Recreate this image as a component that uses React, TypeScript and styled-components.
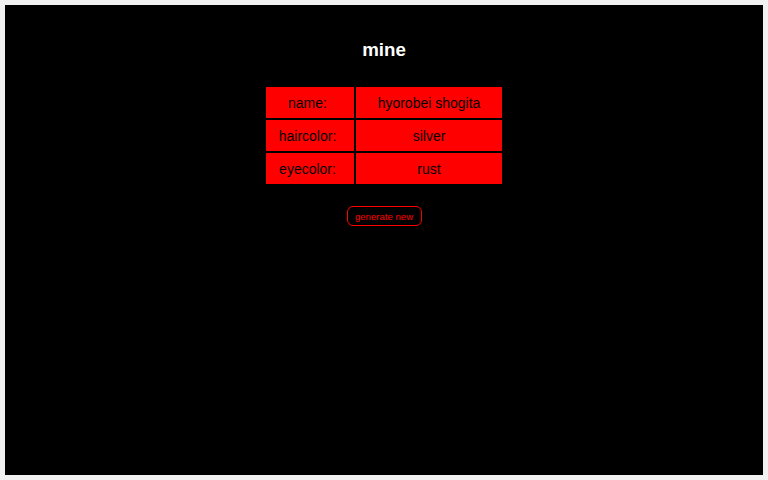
import React from "react";
import styled, { createGlobalStyle } from "styled-components";

const Global = createGlobalStyle`
  html, body { margin: 0; padding: 0; background: #f1f1f1; }
  body { padding: 5px; font-family: "Liberation Sans", Arial, sans-serif; }
`;

const Page = styled.div`
  background: #000;
  height: 470px;
  display: flex;
  flex-direction: column;
  align-items: center;
  padding-top: 34px;
  box-sizing: border-box;
`;

const Title = styled.h3`
  margin: 0;
  color: #fff;
  font-size: 18.72px;
  font-weight: bold;
  line-height: 22px;
`;

const Table = styled.table`
  margin-top: 24px;
  border-collapse: separate;
  border-spacing: 2px;
  background: #000;
`;

const Cell = styled.td<{ $w: number; $pr?: number }>`
  background: #ff0000;
  color: #000;
  width: ${(p) => p.$w}px;
  height: 31px;
  padding: 0 ${(p) => p.$pr ?? 0}px 0 0;
  text-align: center;
  vertical-align: middle;
  font-size: 14px;
  box-sizing: border-box;
`;

const Button = styled.button`
  margin-top: 20px;
  background: #000;
  color: #ff0000;
  border: 1px solid #ff0000;
  border-radius: 6px;
  width: 75px;
  height: 20px;
  padding: 0;
  font-family: "Liberation Sans", Arial, sans-serif;
  font-size: 9.6px;
  cursor: pointer;
`;

const rows = [
  ["name:", "hyorobei shogita"],
  ["haircolor:", "silver"],
  ["eyecolor:", "rust"],
];

export default function App() {
  return (
    <>
      <Global />
      <Page>
        <Title>mine</Title>
        <Table>
          <tbody>
            {rows.map(([k, v]) => (
              <tr key={k}>
                <Cell $w={88} $pr={5}>{k}</Cell>
                <Cell $w={146}>{v}</Cell>
              </tr>
            ))}
          </tbody>
        </Table>
        <Button>generate new</Button>
      </Page>
    </>
  );
}
